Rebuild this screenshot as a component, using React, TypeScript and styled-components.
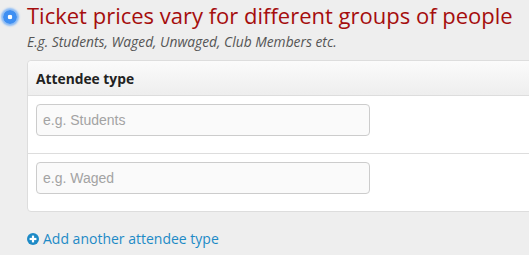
import React from "react";
import styled, { createGlobalStyle } from "styled-components";

const GlobalStyle = createGlobalStyle`
  html, body {
    margin: 0;
    padding: 0;
    background: #eeeeee;
    overflow: hidden;
  }
  body {
    font-family: "Open Sans", "Liberation Sans", sans-serif;
  }
`;

const Page = styled.div`
  width: 529px;
  height: 255px;
  overflow: hidden;
`;

const OptionRow = styled.label`
  display: flex;
  align-items: flex-start;
  gap: 10px;
`;

const Radio = styled.span`
  flex: none;
  width: 14px;
  height: 14px;
  margin: 10px 0 0 3px;
  border-radius: 50%;
  background: radial-gradient(circle, #ffffff 0 2px, #3f8ff2 2.6px);
  box-shadow: 0 0 2px 2px rgba(86, 160, 250, 0.7);
`;

const TextBlock = styled.div`
  display: flex;
  flex-direction: column;
`;

const Title = styled.h2`
  margin: 0;
  padding-top: 1px;
  font-size: 22px;
  line-height: 28px;
  font-weight: 400;
  color: #a50d0d;
  white-space: nowrap;
`;

const Hint = styled.p`
  margin: 4px 0 0;
  font-size: 13.8px;
  line-height: 17px;
  font-style: italic;
  color: #555555;
  white-space: nowrap;
`;

const Panel = styled.div`
  margin: 10px 0 0 27px;
  width: 620px;
  background: #ffffff;
  border: 1px solid #dddddd;
  border-radius: 4px;
`;

const PanelHeader = styled.div`
  height: 34px;
  display: flex;
  align-items: center;
  padding: 0 8px;
  background: linear-gradient(#fbfbfb, #eeeeee);
  border-bottom: 1px solid #dddddd;
  border-radius: 4px 4px 0 0;
  font-size: 13.8px;
  font-weight: 700;
  color: #222222;
`;

const PanelRow = styled.div<{ $last?: boolean }>`
  height: ${({ $last }) => ($last ? 57 : 58)}px;
  padding: 8px 8px 0;
  box-sizing: border-box;
  border-bottom: ${({ $last }) => ($last ? "none" : "1px solid #dddddd")};
`;

const TextInput = styled.input`
  display: block;
  width: 334px;
  height: 32px;
  box-sizing: border-box;
  padding: 0 6px;
  border: 1px solid #cccccc;
  border-radius: 4px;
  background: #fafafa;
  font-family: "Liberation Sans", Arial, sans-serif;
  font-size: 14px;
  color: #333333;
  outline: none;

  &::placeholder {
    color: #a3a3a3;
  }
`;

const AddLink = styled.a`
  display: inline-flex;
  align-items: center;
  gap: 4px;
  margin: 17px 0 0 27px;
  font-size: 14px;
  line-height: 20px;
  color: #1d8ac6;
  text-decoration: none;
  cursor: pointer;
`;

const PlusIcon = () => (
  <svg width="12" height="12" viewBox="0 0 12 12" aria-hidden="true">
    <circle cx="6" cy="6" r="6" fill="#1d8ac6" />
    <rect x="2.6" y="4.9" width="6.8" height="2.2" fill="#ffffff" />
    <rect x="4.9" y="2.6" width="2.2" height="6.8" fill="#ffffff" />
  </svg>
);

const placeholders = ["e.g. Students", "e.g. Waged"];

export default function App() {
  return (
    <Page>
      <GlobalStyle />
      <OptionRow>
        <Radio />
        <TextBlock>
          <Title>Ticket prices vary for different groups of people</Title>
          <Hint>E.g. Students, Waged, Unwaged, Club Members etc.</Hint>
        </TextBlock>
      </OptionRow>
      <Panel>
        <PanelHeader>Attendee type</PanelHeader>
        {placeholders.map((p, i) => (
          <PanelRow key={p} $last={i === placeholders.length - 1}>
            <TextInput placeholder={p} />
          </PanelRow>
        ))}
      </Panel>
      <AddLink>
        <PlusIcon />
        Add another attendee type
      </AddLink>
    </Page>
  );
}
